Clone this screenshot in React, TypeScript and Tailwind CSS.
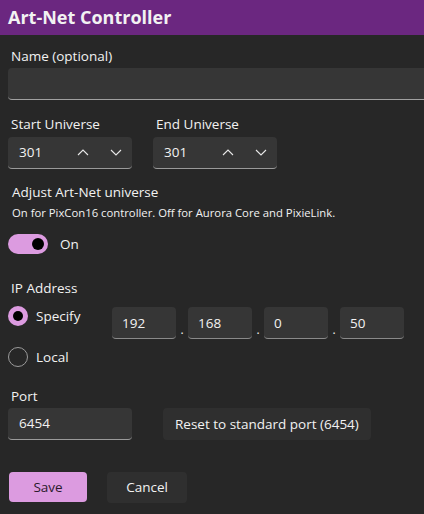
import React, { useState } from 'react';

const font = { fontFamily: '"Open Sans", "Noto Sans", sans-serif' };

function Chevron({ up }: { up?: boolean }) {
  return (
    <svg width="12" height="7" viewBox="0 0 12 7" fill="none" stroke="#e8e8e8" strokeWidth="1.1">
      {up ? <path d="M1 6 L6 1 L11 6" /> : <path d="M1 1 L6 6 L11 1" />}
    </svg>
  );
}

function NumberBox({ value }: { value: string }) {
  return (
    <div className="flex h-8 w-[124px] items-center rounded border-b border-b-[#9a9a9a] bg-[#363636] pl-[11px]">
      <span className="w-[52px] text-[13.5px]">{value}</span>
      <div className="flex w-[36px] justify-center"><Chevron up /></div>
      <div className="flex w-[36px] justify-center"><Chevron /></div>
    </div>
  );
}

function IpBox({ value }: { value: string }) {
  return (
    <div className="flex h-8 w-16 items-center rounded border-b border-b-[#8a8a8a] bg-[#363636] pl-[10px] text-[13.5px]">
      {value}
    </div>
  );
}

function Dot() {
  return <span className="w-3 self-end pb-[3px] text-center text-[12px] leading-3">.</span>;
}

export default function App() {
  const [adjust, setAdjust] = useState(true);
  const [mode, setMode] = useState<'specify' | 'local'>('specify');

  return (
    <div style={font} className="h-[514px] w-[424px] overflow-hidden bg-[#272727] text-[#f2f2f2]">
      <div className="flex h-[35px] items-center bg-[#6b2780] px-2 text-[18px] font-bold">
        Art-Net Controller
      </div>

      <div className="px-2 pt-[11px]">
        <div className="pl-[3px] text-[13.5px] leading-5">Name (optional)</div>
        <div className="mt-[2px] h-8 w-[440px] rounded border-b border-b-[#a0a0a0] bg-[#363636]" />

        <div className="mt-[14px] flex gap-[21px]">
          <div>
            <div className="pl-[3px] text-[13.5px] leading-5">Start Universe</div>
            <div className="mt-[3px]"><NumberBox value="301" /></div>
          </div>
          <div>
            <div className="pl-[3px] text-[13.5px] leading-5">End Universe</div>
            <div className="mt-[3px]"><NumberBox value="301" /></div>
          </div>
        </div>

        <div className="mt-[13px] pl-1 text-[13.5px] leading-5">Adjust Art-Net universe</div>
        <div className="mt-[3px] pl-1 text-[11.3px] leading-4">
          On for PixCon16 controller. Off for Aurora Core and PixieLink.
        </div>

        <div className="mt-[13px] flex items-center gap-3">
          <button
            onClick={() => setAdjust(!adjust)}
            className={`flex h-5 w-10 items-center rounded-full px-[4px] ${adjust ? 'justify-end bg-[#dc9be0]' : 'justify-start border border-[#aaa]'}`}
          >
            <span className="h-3 w-3 rounded-full bg-black" />
          </button>
          <span className="text-[13.5px]">{adjust ? 'On' : 'Off'}</span>
        </div>

        <div className="mt-6 pl-[3px] text-[13.5px] leading-5">IP Address</div>

        <div className="mt-2 flex items-start">
          <div className="flex w-[104px] flex-col gap-5">
            <button onClick={() => setMode('specify')} className="flex items-center gap-2 text-[13.5px]">
              <span className={`flex h-5 w-5 items-center justify-center rounded-full ${mode === 'specify' ? 'bg-[#dc9be0]' : 'border border-[#9a9a9a]'}`}>
                {mode === 'specify' && <span className="h-[10px] w-[10px] rounded-full bg-black" />}
              </span>
              Specify
            </button>
            <button onClick={() => setMode('local')} className="flex items-center gap-2 text-[13.5px]">
              <span className={`flex h-5 w-5 items-center justify-center rounded-full ${mode === 'local' ? 'bg-[#dc9be0]' : 'border border-[#9a9a9a]'}`}>
                {mode === 'local' && <span className="h-[10px] w-[10px] rounded-full bg-black" />}
              </span>
              Local
            </button>
          </div>
          <div className="mt-[1px] flex">
            <IpBox value="192" />
            <Dot />
            <IpBox value="168" />
            <Dot />
            <IpBox value="0" />
            <Dot />
            <IpBox value="50" />
          </div>
        </div>

        <div className="mt-[19px] pl-[3px] text-[13.5px] leading-5">Port</div>
        <div className="mt-[2px] flex gap-[31px]">
          <div className="flex h-8 w-[124px] items-center rounded border-b border-b-[#9a9a9a] bg-[#363636] pl-[11px] text-[13.5px]">
            6454
          </div>
          <button className="h-8 rounded bg-[#2f2f2f] px-3 text-[13.5px]">Reset to standard port (6454)</button>
        </div>

        <div className="mt-8 flex gap-5">
          <button className="ml-[1px] h-[30px] w-[78px] rounded bg-[#dc9be0] text-[13.5px] text-[#2a1a2c]">Save</button>
          <button className="h-[31px] w-20 rounded bg-[#2f2f2f] text-[13.5px]">Cancel</button>
        </div>
      </div>
    </div>
  );
}
